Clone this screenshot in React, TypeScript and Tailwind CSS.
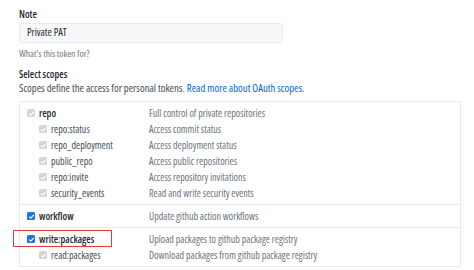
import React from 'react';

type Scope = { name: string; desc: string; disabled?: boolean; sub?: boolean };

const groups: Scope[][] = [
  [
    { name: 'repo', desc: 'Full control of private repositories', disabled: true },
    { name: 'repo:status', desc: 'Access commit status', disabled: true, sub: true },
    { name: 'repo_deployment', desc: 'Access deployment status', disabled: true, sub: true },
    { name: 'public_repo', desc: 'Access public repositories', disabled: true, sub: true },
    { name: 'repo:invite', desc: 'Access repository invitations', disabled: true, sub: true },
    { name: 'security_events', desc: 'Read and write security events', disabled: true, sub: true },
  ],
  [{ name: 'workflow', desc: 'Update github action workflows' }],
  [
    { name: 'write:packages', desc: 'Upload packages to github package registry' },
    { name: 'read:packages', desc: 'Download packages from github package registry', disabled: true, sub: true },
  ],
];

const Check: React.FC<{ disabled?: boolean }> = ({ disabled }) => (
  <span
    className={
      'w-[8px] h-[8px] rounded-[1.5px] flex items-center justify-center shrink-0 ' +
      (disabled ? 'bg-[#d6d6d6]' : 'bg-[#1a73e8]')
    }
  >
    <svg viewBox="0 0 8 8" className="w-[7px] h-[7px]">
      <path d="M1.4 4.1 L3.2 5.8 L6.6 2.1" fill="none" stroke="#fff" strokeWidth="1.3" />
    </svg>
  </span>
);

const Row: React.FC<{ s: Scope }> = ({ s }) => (
  <div className="relative flex items-center h-[16px]">
    <div className={'flex items-center gap-[4px] w-[129px] ' + (s.sub ? 'pl-[19px]' : 'pl-[7px]')}>
      <Check disabled={s.disabled} />
      <span className={s.sub ? 'text-[#444d56]' : 'font-semibold text-[#24292e]'}>{s.name}</span>
    </div>
    <span className="text-[#6a737d]">{s.desc}</span>
    {/* annotation box */}
    {s.name === 'write:packages' && (
      <span className="absolute left-[-7px] top-[-1px] w-[99px] h-[17px] border-[1.5px] border-[#e0393e]" />
    )}
  </div>
);

export default function App() {
  return (
    <div
      className="w-[474px] h-[270px] overflow-hidden bg-white text-[10px] text-[#24292e] pl-[19px] pt-[7px]"
      style={{ fontFamily: '"Open Sans", sans-serif', fontStretch: 'condensed' }}
    >
      <div className="font-semibold leading-[14px]">Note</div>
      <div className="mt-[2px] w-[264px] h-[20px] rounded-[3px] border border-[#e8eaed] bg-[#f6f8fa] flex items-center pl-[7px] text-[10.4px] text-[#24292e]">
        Private PAT
      </div>
      <div className="mt-[5px] text-[9.5px] text-[#6a737d] leading-[12px]">What's this token for?</div>
      <div className="mt-[7px] font-semibold leading-[14px]">Select scopes</div>
      <div className="mt-[1px] leading-[13px] text-[10.7px] text-[#444d56]">
        Scopes define the access for personal tokens. <span className="text-[#0366d6]">Read more about OAuth scopes.</span>
      </div>
      <div className="mt-[6px] w-[442px] border border-[#e8eaed] rounded-[3px] border-b-0">
        {groups.map((g, i) => (
          <div key={i} className="py-[3px] border-b border-[#e8eaed]">
            {g.map((s) => (
              <Row key={s.name} s={s} />
            ))}
          </div>
        ))}
      </div>
    </div>
  );
}
